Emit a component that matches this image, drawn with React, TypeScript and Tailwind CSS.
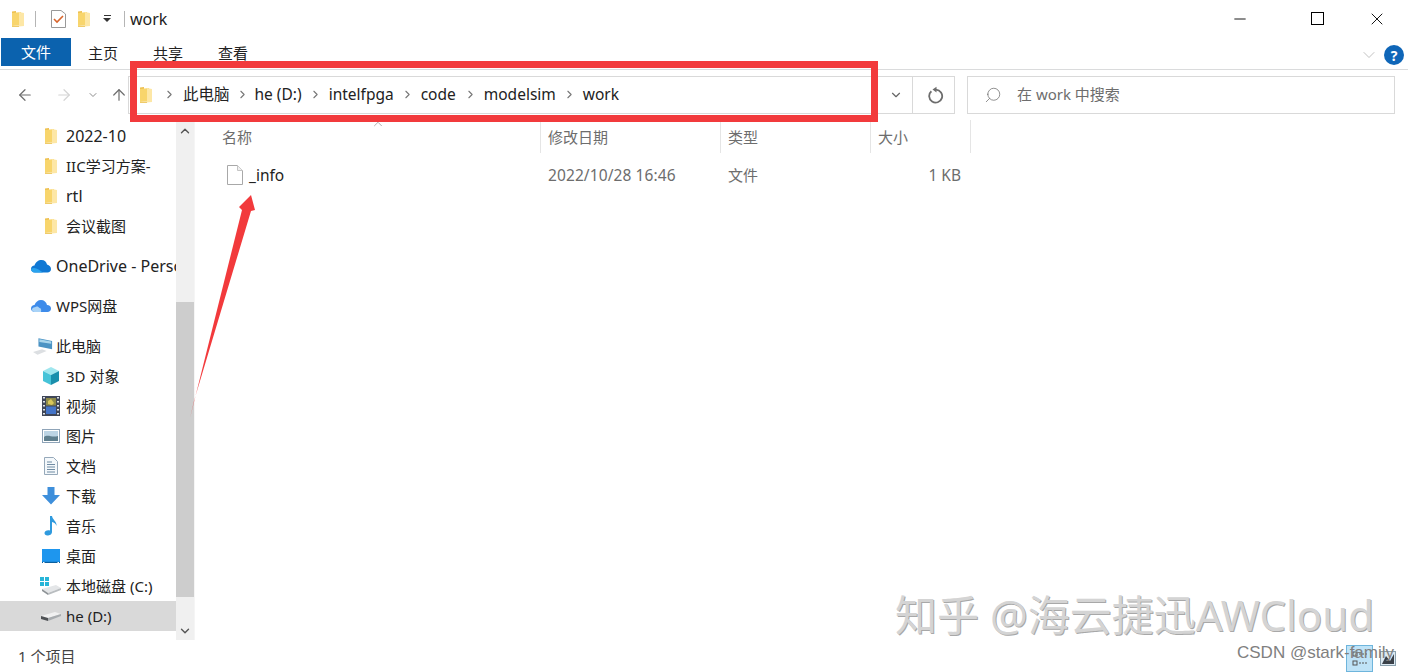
import React from 'react';
import { ArrowLeft, ArrowRight, ArrowUp, ChevronDown, ChevronRight, ChevronUp, Search, Minus, X } from 'lucide-react';

const Folder = ({ className = '' }: { className?: string }) => (
  <svg viewBox="0 0 14 18" className={className}>
    <path d="M1 1.5 L5 1 L5 3 L1 4 Z" fill="#eec04f" />
    <path d="M1 3 L10 2 L10 15 L1 16 Z" fill="#f8d56c" />
    <path d="M8 2 L13 3 L13 16 L8 16.5 Z" fill="#fde7a6" />
    <path d="M1 16 L8 15.5 L8 17 L1 17 Z" fill="#efcb6a" />
  </svg>
);

const ThreeD = () => (
  <svg viewBox="0 0 20 20" className="w-[20px] h-[20px]">
    <path d="M10 1 L18 5 L10 9 L2 5 Z" fill="#9fe6ee" />
    <path d="M2 5 L10 9 L10 19 L2 15 Z" fill="#46c3d8" />
    <path d="M18 5 L10 9 L10 19 L18 15 Z" fill="#1a8fac" />
  </svg>
);

const Film = () => (
  <svg viewBox="0 0 18 20" className="w-[18px] h-[20px]">
    <rect width="18" height="20" fill="#3f4657" />
    <rect x="4" y="2" width="10" height="7.5" fill="#8d8a4a" />
    <rect x="4" y="10.5" width="10" height="7.5" fill="#4474c8" />
    <path d="M6 5 L9 3 L12 7 L10 9 L6 8 Z" fill="#d8c75a" />
    {[2, 6, 10, 14, 18].map((y) => (
      <g key={y}>
        <rect x="1" y={y - 1} width="2" height="1.5" fill="#dfe3ea" />
        <rect x="15" y={y - 1} width="2" height="1.5" fill="#dfe3ea" />
      </g>
    ))}
  </svg>
);

const Picture = () => (
  <svg viewBox="0 0 18 14" className="w-[18px] h-[14px]">
    <rect x="0.5" y="0.5" width="17" height="13" fill="#fff" stroke="#8fa4b8" />
    <rect x="2" y="2" width="14" height="10" fill="#bcd4e4" />
    <path d="M2 8 C6 5 10 9 16 7 V12 H2 Z" fill="#5f7f8e" />
  </svg>
);

const Doc = () => (
  <svg viewBox="0 0 14 18" className="w-[14px] h-[18px]">
    <path d="M0.5 0.5 H9.5 L13.5 4.5 V17.5 H0.5 Z" fill="#f4f8fb" stroke="#96a9ba" />
    <path d="M3 5 H8 M3 7.5 H11 M3 10 H11 M3 12.5 H11 M3 15 H11" stroke="#6f8ba3" strokeWidth="1" />
  </svg>
);

const Download = () => (
  <svg viewBox="0 0 18 18" className="w-[18px] h-[18px]">
    <path d="M5.5 0 H12.5 V8 H18 L9 17.5 L0 8 H5.5 Z" fill="#3e8fdb" />
  </svg>
);

const Music = () => (
  <svg viewBox="0 0 14 20" className="w-[14px] h-[20px]">
    <path d="M6 0 H8 C8.5 4 13 5 12.5 10 C12 7.5 10 6.5 8 6 V16 C8 18.5 5.5 19.5 3.5 19.5 C1.5 19.5 0.5 18.5 0.5 17 C0.5 15 3.5 13.5 6 14.5 Z" fill="#2f9ade" />
  </svg>
);

const Desktop = () => (
  <svg viewBox="0 0 18 14" className="w-[18px] h-[14px]">
    <rect width="18" height="14" fill="#1e96ee" />
    <rect y="12.8" width="18" height="1.2" fill="#0b5f9e" />
    <rect x="1" y="13" width="1.5" height="1" fill="#fff" />
    <rect x="15.5" y="13" width="1.5" height="1" fill="#fff" />
  </svg>
);

const DriveC = () => (
  <svg viewBox="0 0 22 18" className="w-[22px] h-[18px]">
    <rect x="0" y="0" width="4" height="4" fill="#27b5d8" />
    <rect x="5" y="0" width="4" height="4" fill="#27b5d8" />
    <rect x="0" y="5" width="4" height="4" fill="#27b5d8" />
    <rect x="5" y="5" width="4" height="4" fill="#27b5d8" />
    <path d="M2 12 L16 8 L21 11 L8 16 Z" fill="#e4e6e8" />
    <path d="M2 12 L8 16 L8 18 L2 14 Z" fill="#8d9296" />
    <path d="M8 16 L21 11 L21 13 L8 18 Z" fill="#b9bdc0" />
  </svg>
);

const DriveD = () => (
  <svg viewBox="0 0 20 10" className="w-[20px] h-[10px]">
    <path d="M0 5 L14 1 L20 3 L7 7 Z" fill="#f1f1f1" />
    <path d="M0 5 L7 7 L7 10 L0 8 Z" fill="#4e5154" />
    <path d="M7 7 L20 3 L20 5 L7 10 Z" fill="#a7abae" />
  </svg>
);

const Cloud = () => (
  <svg viewBox="0 0 20 14" className="w-[20px] h-[14px]">
    <path d="M4 13.5 C1 13.5 0 11.5 0 10 C0 8 1.5 6.6 3.5 6.6 C4.5 3 7.5 1 10.5 1 C13.5 1 15.5 3 16 5.5 C18.5 6 20 8 20 10 C20 12 18.5 13.5 16.5 13.5 Z" fill="#0f78d4" />
    <path d="M4 13.5 C1 13.5 0 11.5 0 10 C4 7 8 11 12 13.5 Z" fill="#2aa3ee" />
  </svg>
);

const WpsCloud = () => (
  <svg viewBox="0 0 20 14" className="w-[20px] h-[14px]">
    <path d="M4 13 C1.5 13 0 11.5 0 9.5 C0 7.5 1.5 6 3.5 6 C4.5 3 7 1 10 1 C13 1 15.5 3 16 6 C18.5 6 20 7.5 20 9.5 C20 11.5 18.5 13 16.5 13 Z" fill="#3d8bea" />
    <path d="M3.5 13 C2 13 1 12 1 10.5 C1 9 2.5 8 4 8.2 C5 7 7.5 7 8.5 9 C10 9 10.5 11 10 13 Z" fill="#a9d3f7" />
  </svg>
);

const Pc = () => (
  <svg viewBox="0 0 22 18" className="w-[20px] h-[17px]">
    <path d="M6 0 L21 3 L21 12 L6 9 Z" fill="#4b93c4" />
    <path d="M7 1 L20 3.6 L20 6 L7 4 Z" fill="#a8d5ec" />
    <path d="M0 15 L10 12 L15 14 L5 18 Z" fill="#dcdfe2" />
  </svg>
);

const Row = ({ icon, label, indent, active, latin }: { icon: React.ReactNode; label: string; indent: string; active?: boolean; latin?: string }) => (
  <div className={`h-[30px] flex items-center whitespace-nowrap overflow-hidden ${active ? 'bg-[#d9d9d9]' : ''}`}>
    <span className={`${indent} flex items-center justify-center shrink-0`}>{icon}</span>
    <span className={latin}>{label}</span>
  </div>
);

const Crumb = ({ label, gap }: { label: string; gap: string }) => (
  <>
    <ChevronRight size={13} strokeWidth={2} className="text-[#777] shrink-0" />
    <span className={gap}>{label}</span>
  </>
);

const font = { fontFamily: '"Noto Sans", "Noto Sans CJK SC", sans-serif' };

export default function App() {
  return (
    <div className="relative w-[1408px] h-[672px] overflow-hidden bg-white text-[15px] text-[#222]" style={font}>
      {/* title bar */}
      <div className="h-[38px] flex items-center pb-[1px]">
        <Folder className="w-[14px] h-[18px] ml-[11px]" />
        <div className="w-px h-[16px] bg-[#b5b5b5] ml-[10px]" />
        <svg viewBox="0 0 15 18" className="w-[15px] h-[18px] ml-[15px]">
          <path d="M0.5 0.5 H10 L14.5 4 V17.5 H0.5 Z" fill="#fff" stroke="#999" />
          <path d="M3 9 L6 12 L12 6" fill="none" stroke="#d8652c" strokeWidth="1.6" />
        </svg>
        <Folder className="w-[14px] h-[18px] ml-[11px]" />
        <span className="ml-[12px] flex flex-col items-center gap-[2px]">
          <span className="w-[7px] h-px bg-[#333]" />
          <span className="w-0 h-0 border-x-[4px] border-x-transparent border-t-[4px] border-t-[#333]" />
        </span>
        <div className="w-px h-[16px] bg-[#b5b5b5] ml-[13px]" />
        <span className="ml-[5px] text-[16px]">work</span>
        <div className="ml-auto flex items-center">
          <Minus size={18} strokeWidth={1.2} className="text-black mr-[62px]" />
          <div className="w-[13px] h-[13px] border border-black mr-[43px]" />
          <X size={20} strokeWidth={1.1} className="text-black mr-[21px]" />
        </div>
      </div>

      {/* ribbon tabs */}
      <div className="h-[32px] flex border-b border-[#dadbdc]">
        <div className="ml-[1px] w-[70px] h-[28px] bg-[#0b62ae] text-white flex items-center justify-center">文件</div>
        <div className="ml-[17px] h-[28px] pt-[2px] flex items-center">主页</div>
        <div className="ml-[35px] h-[28px] pt-[2px] flex items-center">共享</div>
        <div className="ml-[35px] h-[28px] pt-[2px] flex items-center">查看</div>
        <div className="ml-auto flex items-center h-[28px] pt-[6px]">
          <ChevronDown size={20} strokeWidth={1} className="text-[#b5b5b5] mr-[5px]" />
          <div className="w-[20px] h-[20px] mr-[4px] rounded-full bg-[#0f66b8] text-white text-[14px] font-bold flex items-center justify-center">?</div>
        </div>
      </div>

      {/* nav bar */}
      <div className="h-[50px] flex items-center pb-[1px]">
        <ArrowLeft size={18} strokeWidth={1.6} className="ml-[16px] text-[#6d6d6d]" />
        <ArrowRight size={18} strokeWidth={1.6} className="ml-[21px] text-[#d4d4d4]" />
        <ChevronDown size={12} strokeWidth={2} className="ml-[14px] text-[#8c8c8c]" />
        <ArrowUp size={18} strokeWidth={1.6} className="ml-[11px] text-[#6d6d6d]" />
        <div className="w-[827px] h-[38px] border border-[#d9d9d9] flex items-center text-[15.5px]">
          <Folder className="w-[14px] h-[18px] ml-[10px]" />
          <span className="ml-[10px] flex items-center">
            <Crumb label="此电脑" gap="mx-[7px] mr-[6px]" />
            <Crumb label="he (D:)" gap="ml-[6px] mr-[7px]" />
            <Crumb label="intelfpga" gap="mx-[7px]" />
            <Crumb label="code" gap="ml-[7px] mr-[8px]" />
            <Crumb label="modelsim" gap="mx-[7px]" />
            <Crumb label="work" gap="mx-[7px]" />
          </span>
          <ChevronDown size={14} strokeWidth={2} className="ml-auto mr-[9px] text-[#666]" />
          <div className="w-px h-full bg-[#d9d9d9]" />
          <div className="w-[41px] flex items-center justify-center pl-[4px]">
            <svg viewBox="0 0 18 18" className="w-[18px] h-[18px]">
              <path d="M4.4 5.2 A6.5 6.5 0 1 0 9 3.6" fill="none" stroke="#6d6d6d" strokeWidth="1.8" />
              <path d="M9.5 0.8 L5.5 3.6 L9.5 6.6 Z" fill="#6d6d6d" />
            </svg>
          </div>
        </div>
        <div className="ml-[12px] w-[428px] h-[38px] border border-[#d9d9d9] flex items-center text-[#6d6d6d]">
          <Search size={18} strokeWidth={1} className="ml-[16px] text-[#6d6d6d] -scale-x-100" />
          <span className="ml-[15px]">在 work 中搜索</span>
        </div>
      </div>

      {/* main */}
      <div className="flex h-[520px]">
        <div className="w-[176px] shrink-0 pt-[1px]">
          <Row indent="w-[66px] pl-[36px]" icon={<Folder className="w-[14px] h-[18px]" />} label="2022-10" latin="text-[16px]" />
          <Row indent="w-[66px] pl-[36px]" icon={<Folder className="w-[14px] h-[18px]" />} label="IIC学习方案-" />
          <Row indent="w-[66px] pl-[36px]" icon={<Folder className="w-[14px] h-[18px]" />} label="rtl" latin="text-[16px]" />
          <Row indent="w-[66px] pl-[36px]" icon={<Folder className="w-[14px] h-[18px]" />} label="会议截图" />
          <div className="mt-[10px]">
            <Row indent="w-[56px] pl-[26px]" icon={<Cloud />} label="OneDrive - Personal" latin="text-[16px]" />
          </div>
          <div className="mt-[10px]">
            <Row indent="w-[56px] pl-[26px]" icon={<WpsCloud />} label="WPS网盘" />
          </div>
          <div className="mt-[10px]">
            <Row indent="w-[56px] pl-[29px]" icon={<Pc />} label="此电脑" />
          </div>
          <Row indent="w-[66px] pl-[36px]" icon={<ThreeD />} label="3D 对象" />
          <Row indent="w-[66px] pl-[36px]" icon={<Film />} label="视频" />
          <Row indent="w-[66px] pl-[36px]" icon={<Picture />} label="图片" />
          <Row indent="w-[66px] pl-[36px]" icon={<Doc />} label="文档" />
          <Row indent="w-[66px] pl-[36px]" icon={<Download />} label="下载" />
          <Row indent="w-[66px] pl-[36px]" icon={<Music />} label="音乐" />
          <Row indent="w-[66px] pl-[36px]" icon={<Desktop />} label="桌面" />
          <Row indent="w-[66px] pl-[35px]" icon={<DriveC />} label="本地磁盘 (C:)" />
          <Row indent="w-[66px] pl-[36px]" icon={<DriveD />} label="he (D:)" active />
        </div>

        {/* nav scrollbar */}
        <div className="w-[19px] shrink-0 bg-[#f0f0f0] flex flex-col border-r border-[#f5f5f5]">
          <div className="h-[182px] flex justify-center pt-[4px]">
            <ChevronUp size={14} strokeWidth={2.4} className="text-[#555]" />
          </div>
          <div className="h-[295px] bg-[#cdcdcd]" />
          <div className="flex-1 flex justify-center items-end pb-[2px]">
            <ChevronDown size={14} strokeWidth={2.4} className="text-[#555]" />
          </div>
        </div>

        {/* file list */}
        <div className="flex-1 text-[#6d6d6d]">
          <div className="h-[33px] flex relative">
            <div className="w-[346px] border-r border-[#e5e5e5] pl-[27px] pt-[1px] flex items-center">名称</div>
            <div className="w-[180px] border-r border-[#e5e5e5] pl-[7px] pt-[1px] flex items-center">修改日期</div>
            <div className="w-[150px] border-r border-[#e5e5e5] pl-[7px] pt-[1px] flex items-center">类型</div>
            <div className="w-[100px] border-r border-[#e5e5e5] pl-[7px] pt-[1px] flex items-center">大小</div>
            <ChevronUp size={14} strokeWidth={1} className="absolute left-[176px] -top-[3px] text-[#777]" />
          </div>
          <div className="h-[30px] mt-[7px] flex items-center">
            <svg viewBox="0 0 16 20" className="w-[16px] h-[20px] ml-[32px] shrink-0">
              <path d="M0.5 0.5 H10.5 L15.5 5.5 V19.5 H0.5 Z" fill="#fff" stroke="#a8a8a8" />
              <path d="M10.5 0.5 V5.5 H15.5" fill="#f0f0f0" stroke="#c4c4c4" />
            </svg>
            <span className="w-[298px] pl-[6px] pt-[1px] text-[#222] text-[15.5px]">_info</span>
            <span className="w-[180px] pl-[7px] pt-[1px] text-[15.5px] tracking-[0.1px]">2022/10/28 16:46</span>
            <span className="w-[100px] pl-[7px]">文件</span>
            <span className="w-[140px] text-right pt-[1px] text-[15.5px]">1 KB</span>
          </div>
        </div>
      </div>

      {/* status bar */}
      <div className="h-[32px] flex items-center pl-[18px] text-[#444]">1 个项目</div>

      {/* annotations drawn over the screenshot */}
      <div className="absolute left-[130px] top-[61px] w-[748px] h-[61px] border-[7px] border-[#f23a3c]" />
      <svg className="absolute left-[185px] top-[190px]" width="80" height="235" viewBox="0 0 80 235">
        <path d="M5 228 L57 20 L54 17 L66 5 L70 20 L66 21 L9 211 Z" fill="#f23a3c" />
      </svg>
      <div className="absolute left-[895px] top-[585px] text-[42px] leading-[60px] text-[#d4d4d4] [text-shadow:1px_1px_0_#a8a8a8] whitespace-nowrap">知乎 @海云捷迅AWCloud</div>

      {/* view buttons */}
      <div className="absolute left-[1346px] top-[645px] w-[27px] h-[27px] bg-[#bfe3f7] border border-[#6eb5dc] flex items-center justify-center">
        <svg viewBox="0 0 18 18" className="w-[18px] h-[18px]">
          <rect x="2" y="2" width="4" height="4" fill="none" stroke="#555" />
          <rect x="2" y="11" width="4" height="4" fill="none" stroke="#555" />
          <path d="M8 4 H17 M8 13 H17" stroke="#555" strokeDasharray="2 1" />
        </svg>
      </div>
      <svg viewBox="0 0 16 15" className="absolute left-[1380px] top-[651px] w-[16px] h-[15px]">
        <rect x="0.5" y="0.5" width="15" height="14" fill="#dce9f2" stroke="#8aa0ad" />
        <path d="M2 13 L6 5 L10 10 L14 3 V13 Z" fill="#3a4048" />
      </svg>
      <div className="absolute left-[1237px] top-[641px] text-[17px] leading-[24px] text-[#808080] whitespace-nowrap" style={{ fontFamily: '"Liberation Sans", sans-serif' }}>CSDN @stark-family</div>
    </div>
  );
}
